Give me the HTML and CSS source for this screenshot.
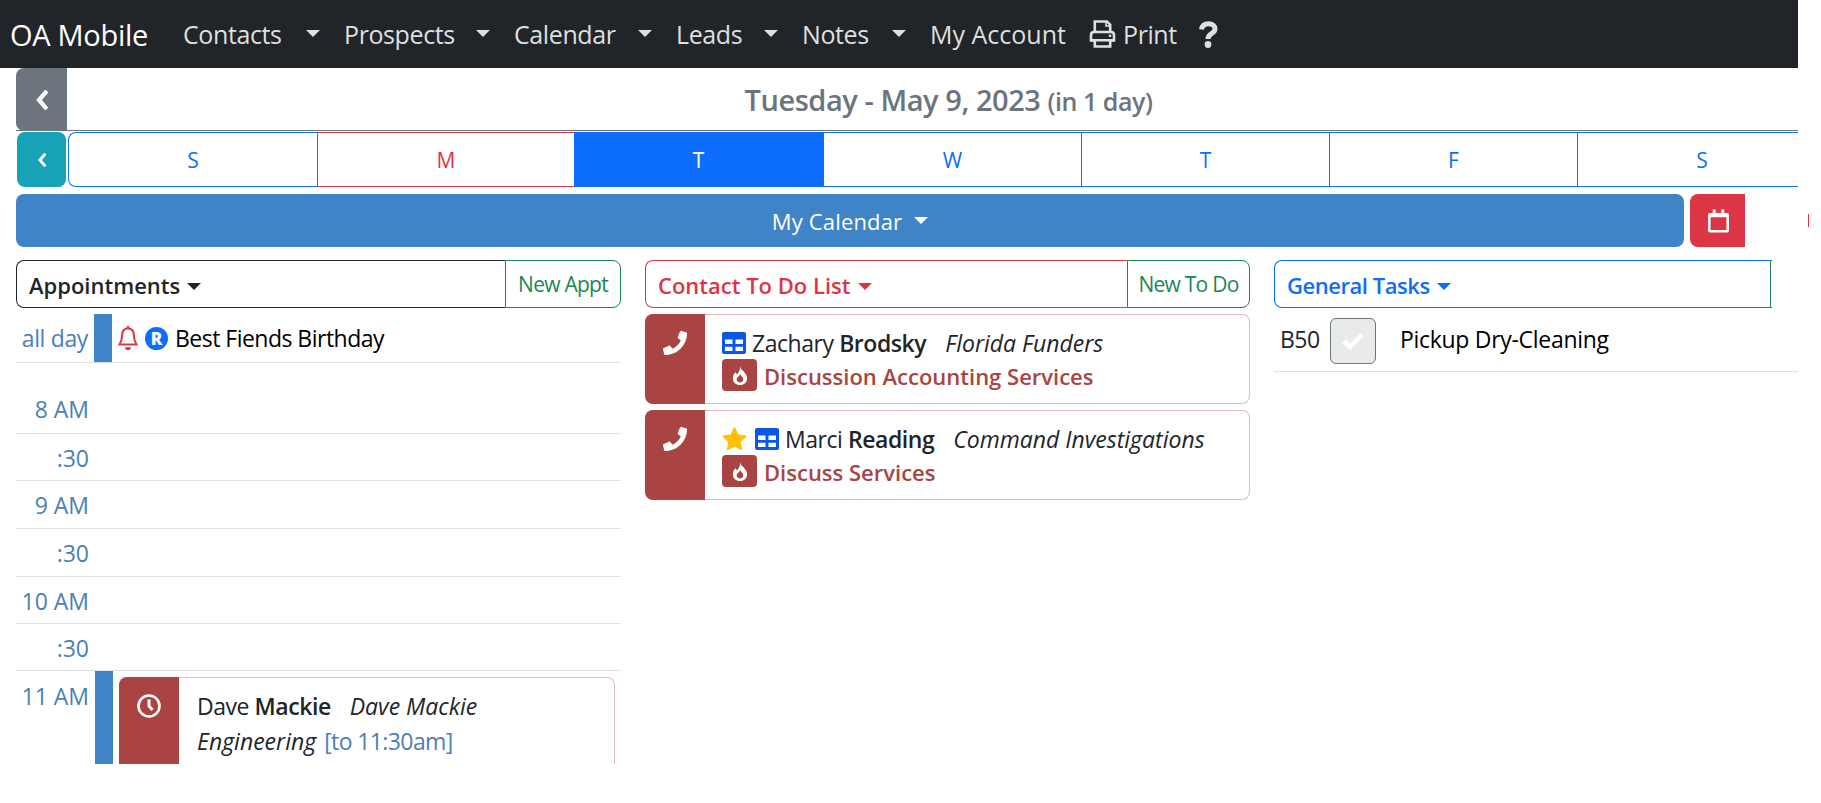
FILE: index.html
```
<!DOCTYPE html>
<html lang="en">
<head>
  <meta charset="UTF-8">
  <meta name="viewport" content="width=device-width, initial-scale=1.0">
  <title>OA Mobile - Calendar</title>
  <link rel="stylesheet" href="styles.css">
</head>
<body>
  <!-- Shared icons -->
  <svg class="sprite" width="0" height="0">
    <symbol id="chevron" viewBox="0 0 12 20"><path d="M9.500 2.500 L3 10 L9.500 17.500" fill="none" stroke="currentColor" stroke-width="4.200" stroke-linecap="square"/></symbol>
    <symbol id="phone" viewBox="0 0 512 512"><path fill="currentColor" d="M493.400 24.600l-104-24c-11.300-2.600-22.900 3.300-27.500 13.900l-48 112c-4.200 9.800-1.400 21.300 6.900 28l60.600 49.600c-36 76.700-98.900 140.500-177.200 177.200l-49.600-60.600c-6.800-8.300-18.200-11.100-28-6.900l-112 48C3.900 366.500-2 378.100.6 389.400l24 104C27.100 504.200 36.700 512 48 512c256.100 0 464-207.500 464-464 0-11.200-7.700-20.900-18.600-23.400z"/></symbol>
    <symbol id="table" viewBox="0 0 24 22"><path fill="currentColor" fill-rule="evenodd" d="M2 0H22Q24 0 24 2V20Q24 22 22 22H2Q0 22 0 20V2Q0 0 2 0ZM3 7.500V12H10.500V7.500ZM13.500 7.500V12H21V7.500ZM3 14.700V19H10.500V14.700ZM13.500 14.700V19H21V14.700Z"/></symbol>
    <symbol id="fire" viewBox="0 0 16 20"><path fill="currentColor" fill-rule="evenodd" d="M8 0C8.500 4.500 15.500 7 15.500 12.800C15.500 17 12.200 20 8 20S.5 17 .5 12.800C.5 9.800 1.800 8 3.400 6.200C3.800 7.600 4.200 8.300 5 8.800C7.300 6.500 8.300 3.500 8 0ZM8 8.500C7.700 11 4.500 11.800 4.500 14.200C4.500 16 6 17.300 8 17.300S11.500 16 11.500 14.200C11.500 11.800 9.200 11 8 8.500Z"/></symbol>
  </svg>

  <div class="page">
    <!-- Navbar -->
    <nav class="navbar">
      <a class="brand">OA Mobile</a>
      <a>Contacts</a><i class="caret"></i>
      <a>Prospects</a><i class="caret"></i>
      <a>Calendar</a><i class="caret"></i>
      <a>Leads</a><i class="caret"></i>
      <a>Notes</a><i class="caret"></i>
      <a class="account">My Account</a>
      <svg class="print-icon" viewBox="0 0 26 28" fill="none" stroke="currentColor" stroke-width="2.600"><path d="M5.300 12V1.500H17.500L20.700 4.700V12"/><path d="M16.500 1.500V6H21" stroke-width="1.500"/><path d="M5.500 20.500H1.500V15Q1.500 12 4.500 12H21.500Q24.500 12 24.500 15V20.500H20.500"/><path d="M1.500 20.300H24.500M5.300 20.300V26.500H20.700V20.300"/><path d="M19.300 15.800h2.400" stroke-width="2.400"/></svg>
      <a>Print</a>
      <svg class="help-icon" viewBox="0 0 19 27"><path d="M2.500 8.500C3 5 5.500 2.700 9.500 2.700C13.500 2.700 16 5 16 8C16 13 9 12 9 18" fill="none" stroke="currentColor" stroke-width="5"/><circle cx="9" cy="23.500" r="3.400" fill="currentColor"/></svg>
    </nav>

    <!-- Selected day -->
    <div class="day-bar">
      <button class="prev-day"><svg class="chevron"><use href="#chevron"/></svg></button>
      <h1>Tuesday - May 9, 2023 <small>(in 1 day)</small></h1>
    </div>

    <!-- Week days -->
    <div class="week">
      <button class="prev-week"><svg class="chevron"><use href="#chevron"/></svg></button>
      <div class="days">
        <button class="first">S</button>
        <button class="today">M</button>
        <button class="selected">T</button>
        <button>W</button>
        <button>T</button>
        <button>F</button>
        <button>S</button>
      </div>
    </div>
  </div>

  <!-- Calendar picker -->
  <div class="picker">
    <button class="picker-btn"><span>My Calendar</span><i class="caret"></i></button>
    <button class="picker-date">
      <svg viewBox="0 0 22 24"><path fill="currentColor" fill-rule="evenodd" d="M5 0H8V3.500H14V0H17V3.500H20Q22 3.500 22 5.500V22Q22 24 20 24H2Q0 24 0 22V5.500Q0 3.500 2 3.500H5ZM2.700 8V21.300H19.300V8Z"/></svg>
    </button>
    <span class="edge"></span>
  </div>

  <div class="columns">
    <!-- Appointments -->
    <section class="column">
      <header class="head dark">
        <h2>Appointments<i class="caret"></i></h2>
        <button class="new-appt">New Appt</button>
      </header>
      <div class="slot all-day">
        <span class="time">all day</span>
        <i class="busy"></i>
        <svg class="bell" viewBox="0 0 20 24"><path d="M10 2.500C6 2.500 4.200 5.500 4.200 9C4.200 13.500 3.500 15 1.500 18.500H18.500C16.500 15 15.800 13.500 15.800 9C15.800 5.500 14 2.500 10 2.500Z" fill="none" stroke="currentColor" stroke-width="2"/><path d="M8.800 0h2.400v3H8.800ZM7 21.200h6a3 2.800 0 0 1-6 0Z" fill="currentColor"/></svg>
        <span class="badge-r">R</span>
        <span class="event">Best Fiends Birthday</span>
      </div>
      <div class="slot first-slot"><span class="time">8 AM</span></div>
      <div class="slot"><span class="time">:30</span></div>
      <div class="slot tall"><span class="time">9 AM</span></div>
      <div class="slot tall"><span class="time">:30</span></div>
      <div class="slot"><span class="time">10 AM</span></div>
      <div class="slot"><span class="time">:30</span></div>
      <div class="slot last-slot">
        <span class="time">11 AM</span>
        <i class="busy"></i>
        <article class="card appt">
          <div class="card-side"><svg class="clock" viewBox="0 0 24 24" fill="none" stroke="currentColor"><circle cx="12" cy="12" r="10.500" stroke-width="2.600"/><path d="M12 5.500V12L15.500 16" stroke-width="3"/></svg></div>
          <div class="card-body">
            <p class="person"><span>Dave <b>Mackie</b></span><em>Dave Mackie</em></p>
            <p class="person until"><em>Engineering</em><span class="to">[to 11:30am]</span></p>
          </div>
        </article>
      </div>
    </section>

    <!-- To do list -->
    <section class="column">
      <header class="head red">
        <h2>Contact To Do List<i class="caret"></i></h2>
        <button class="new-todo">New To Do</button>
      </header>
      <article class="card todo">
        <div class="card-side"><svg class="phone"><use href="#phone"/></svg></div>
        <div class="card-body">
          <p class="person"><svg class="table"><use href="#table"/></svg><span>Zachary <b>Brodsky</b></span><em>Florida Funders</em></p>
          <p class="task"><span class="hot"><svg><use href="#fire"/></svg></span><strong>Discussion Accounting Services</strong></p>
        </div>
      </article>
      <article class="card todo">
        <div class="card-side"><svg class="phone"><use href="#phone"/></svg></div>
        <div class="card-body">
          <p class="person"><svg class="star" viewBox="0 0 24 23"><path fill="currentColor" stroke="currentColor" stroke-linejoin="round" stroke-width="1.500" d="M12 1L15.200 7.800L22.700 8.800L17.300 14L18.600 21.500L12 18L5.400 21.500L6.700 14L1.300 8.800L8.800 7.800Z"/></svg><svg class="table"><use href="#table"/></svg><span>Marci <b>Reading</b></span><em>Command Investigations</em></p>
          <p class="task"><span class="hot"><svg><use href="#fire"/></svg></span><strong>Discuss Services</strong></p>
        </div>
      </article>
    </section>

    <!-- General tasks -->
    <section class="column tasks">
      <header class="head blue">
        <h2>General Tasks<i class="caret"></i></h2>
        <span class="cut"></span>
      </header>
      <div class="general">
        <span class="rank">B50</span>
        <button class="check"><svg viewBox="0 0 22 18"><path d="M2 9.500L8 15L20 3" fill="none" stroke="currentColor" stroke-width="4.500"/></svg></button>
        <span class="event">Pickup Dry-Cleaning</span>
      </div>
    </section>
  </div>
</body>
</html>
```
FILE: styles.css
```
/* General Styles */
* {
  margin: 0;
  padding: 0;
  box-sizing: border-box;
}

body {
  font-family: "Open Sans", "Noto Sans", sans-serif;
  font-size: 23px;
  background-color: #fff;
  color: #212529;
  overflow: hidden;
}

button {
  font: inherit;
  background: none;
  border: none;
  color: inherit;
}

svg {
  display: block;
  flex: none;
}

.sprite {
  position: absolute;
}

.page {
  width: 1798px;
  overflow: hidden;
}

.caret {
  display: inline-block;
  width: 0;
  height: 0;
  border: 7px solid transparent;
  border-top-color: currentColor;
  border-bottom: 0;
}

/* Navbar */
.navbar {
  display: grid;
  grid-template-columns: 173px 123px 38px 132px 38px 124px 38px 88px 38px 90px 38px 159px 34px 76px 20px;
  align-items: center;
  height: 68px;
  padding-left: 10px;
  background-color: #212529;
  color: #dedfdf;
  font-size: 25px;
  letter-spacing: -0.4px;
  white-space: nowrap;
}

.navbar .brand {
  color: #fff;
  font-size: 29px;
  letter-spacing: -0.3px;
}

.navbar .account {
  letter-spacing: 0;
}

.navbar .caret {
  margin-bottom: 1px;
}

.print-icon {
  width: 27px;
  height: 28px;
}

.help-icon {
  width: 19px;
  height: 27px;
}

/* Day bar */
.day-bar {
  display: flex;
  height: 63px;
  margin-left: 16px;
  border-bottom: 1px solid #6c757d;
}

.prev-day {
  display: flex;
  align-items: center;
  justify-content: center;
  width: 51px;
  height: 63px;
  background-color: #6c757d;
  color: #fff;
  border-radius: 8px 0 0 8px;
}

.chevron {
  width: 12px;
  height: 20px;
}

.day-bar h1 {
  flex: 1;
  padding: 12px 0 0 32px;
  font-size: 29px;
  font-weight: 550;
  letter-spacing: -0.45px;
  line-height: 40px;
  text-align: center;
  color: #6c757d;
}

.day-bar small {
  font-size: 25px;
}

/* Week */
.week {
  display: flex;
  gap: 2px;
  height: 56px;
  padding: 1px 0 0 17px;
}

.prev-week {
  display: flex;
  flex: none;
  align-items: center;
  justify-content: center;
  width: 49px;
  background-color: #17a2b8;
  color: #fff;
  border-radius: 8px;
}

.prev-week .chevron {
  width: 10px;
  height: 14px;
}

.days {
  display: grid;
  flex: none;
  grid-template-columns: 249px 257px 250px 258px 248px 248px 249px;
}

.days button {
  border: 1px solid #0d6efd;
  border-left: 0;
  color: #0d6efd;
  font-size: 21px;
}

.days .first {
  border-left: 1px solid #0d6efd;
  border-right: 0;
  border-radius: 8px 0 0 8px;
}

.days .today {
  border: 1px solid #dc3545;
  border-right: 0;
  color: #dc3545;
}

.days .selected {
  background-color: #0d6efd;
  color: #fff;
}

/* Calendar picker */
.picker {
  display: flex;
  align-items: center;
  height: 60px;
  padding: 7px 0 0 16px;
}

.picker-btn {
  display: flex;
  align-items: center;
  justify-content: center;
  gap: 12px;
  width: 1668px;
  height: 53px;
  background-color: #3f84c7;
  color: #fff;
  border-radius: 8px;
  font-size: 22px;
  letter-spacing: 0.15px;
}

.picker-date {
  display: flex;
  align-items: center;
  width: 55px;
  height: 53px;
  margin-left: 6px;
  padding-left: 18px;
  background-color: #dc3545;
  color: #fff;
  border-radius: 8px 0 0 8px;
}

.picker-date svg {
  width: 21px;
  height: 24px;
}

.edge {
  width: 1px;
  height: 13px;
  margin-left: 63px;
  background-color: #dc3545;
}

/* Columns */
.columns {
  display: grid;
  grid-template-columns: 605px 605px 524px;
  gap: 24px;
  height: 517px;
  padding: 13px 0 0 16px;
  overflow: hidden;
}

.head {
  display: flex;
  height: 48px;
}

.head h2 {
  flex: 1;
  padding: 0 12px;
  border: 1px solid currentColor;
  border-right: 0;
  border-radius: 8px 0 0 8px;
  font-size: 22px;
  font-weight: 600;
  line-height: 49px;
}

.head .caret {
  margin-left: 7px;
  vertical-align: 4px;
}

.head button {
  border: 1px solid #198754;
  border-radius: 0 8px 8px 0;
  color: #198754;
  font-size: 21px;
  letter-spacing: -0.75px;
}

.new-appt {
  width: 116px;
}

.new-todo {
  width: 123px;
}

.red h2 {
  color: #dc3545;
}

.blue h2 {
  color: #0d6efd;
  letter-spacing: -0.45px;
}

.blue {
  width: 498px;
}

.cut {
  width: 2px;
  border: 1px solid #198754;
  border-right: 0;
}

/* Time slots */
.slot {
  display: flex;
  height: 47px;
  border-bottom: 1px solid #dee2e6;
  line-height: 48px;
}

.time {
  width: 73px;
  flex: none;
  text-align: right;
  color: #4a80b8;
}

.all-day {
  align-items: center;
  height: 49px;
  margin-top: 6px;
  line-height: 50px;
}

.all-day .time {
  width: 72px;
  letter-spacing: -0.35px;
}

.busy {
  width: 18px;
  height: 48px;
  margin-left: 6px;
  background-color: #3f84c7;
}

.bell {
  width: 20px;
  height: 24px;
  margin-left: 6px;
  color: #dc3545;
}

.badge-r {
  width: 23px;
  height: 23px;
  margin: 0 7px 0 7px;
  border-radius: 50%;
  background-color: #0d6efd;
  color: #fff;
  font-size: 17px;
  font-weight: 800;
  line-height: 23px;
  text-align: center;
}

.event {
  color: #000;
  letter-spacing: -0.52px;
}

.first-slot {
  height: 71px;
  padding-top: 22px;
}

.tall {
  height: 48px;
  line-height: 49px;
}

.last-slot {
  height: 120px;
  border-bottom: 0;
  line-height: 50px;
}

.last-slot .busy {
  height: 120px;
}

/* Cards */
.card {
  display: flex;
  border: 1px solid #e6b8c0;
  border-left: 0;
  border-radius: 8px;
}

.card-side {
  display: flex;
  justify-content: center;
  width: 60px;
  margin: -1px 0;
  padding-top: 17px;
  background-color: #a94442;
  color: #fff;
  border-radius: 8px 0 0 8px;
}

.card-body {
  flex: 1;
  padding: 16px 0 0 17px;
}

.todo {
  height: 90px;
  margin-top: 6px;
}

.appt {
  width: 496px;
  margin: 6px 0 0 6px;
}

.appt .card-body {
  padding: 16px 0 0 18px;
}

.phone,
.clock {
  width: 24px;
  height: 24px;
}

.person {
  display: flex;
  align-items: center;
  height: 24px;
  letter-spacing: -0.45px;
  line-height: 24px;
  white-space: nowrap;
}

.person b {
  font-weight: 600;
}

.person em {
  margin-left: 19px;
  letter-spacing: 0;
}

.until {
  margin-top: 11px;
}

.until em {
  margin: 0 8px 0 0;
}

.to {
  color: #4a80b8;
  letter-spacing: -0.6px;
}

.table {
  width: 24px;
  height: 22px;
  margin-right: 6px;
  color: #0a58e8;
}

.star {
  width: 25px;
  height: 24px;
  margin-right: 8px;
  color: #ffc107;
}

.task {
  display: flex;
  align-items: center;
  margin-top: 4px;
  color: #a94442;
  font-size: 22px;
}

.task strong {
  padding-top: 2px;
  font-weight: 600;
}

.hot {
  display: flex;
  align-items: center;
  justify-content: center;
  width: 35px;
  height: 32px;
  margin-right: 7px;
  background-color: #a94442;
  color: #fff;
  border-radius: 4px;
}

.hot svg {
  width: 16px;
  height: 19px;
}

/* General tasks */
.general {
  display: flex;
  align-items: center;
  height: 64px;
  padding: 0 0 2px 6px;
  border-bottom: 1px solid #dee2e6;
}

.rank {
  width: 50px;
  letter-spacing: -0.5px;
}

.check {
  display: flex;
  align-items: center;
  justify-content: center;
  width: 46px;
  height: 46px;
  margin: 5px 24px 0 0;
  border: 1px solid #6c757d;
  border-radius: 6px;
  background-color: #e9ebeb;
  color: #fff;
}

.check svg {
  width: 22px;
  height: 18px;
}

.general .event {
  letter-spacing: -0.3px;
}
```
